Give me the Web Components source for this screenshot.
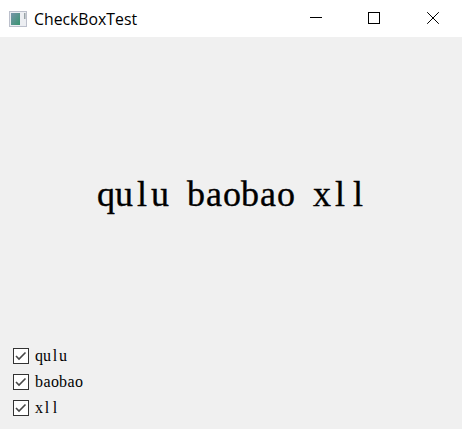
<!DOCTYPE html>
<html>
<head>
<meta charset="utf-8">
<title>CheckBoxTest</title>
<style>
    html, body { margin: 0; height: 100%; }
    body { background: #f0f0f0; overflow: hidden; }
</style>
</head>
<body>
<test-window caption="CheckBoxTest">
    <mono-text slot="display" size="36" text="qulu baobao xll" style="-webkit-text-stroke: 0.35px #000"></mono-text>
    <check-item text="qulu"></check-item>
    <check-item text="baobao"></check-item>
    <check-item text="xll"></check-item>
</test-window>
<script>
// SimSun is not installed: Liberation Serif is 0.5em wide for most letters,
// so pad the narrower ones out to the same cell
class MonoText extends HTMLElement {
    constructor() {
        super();
        this.attachShadow({ mode: 'open' });
    }

    connectedCallback() {
        const size = this.getAttribute('size') || 16;
        const text = this.getAttribute('text') || '';
        const markup = text.replace(/[la]/g, (c) => `<span class="${c}">${c}</span>`);
        this.shadowRoot.innerHTML = `
            <style>
                :host {
                    display: inline-block;
                    font-family: "Liberation Serif", serif;
                    font-size: ${size}px;
                    line-height: 1;
                    color: #000;
                    word-spacing: 0.25em;
                    white-space: nowrap;
                }
                .l { padding: 0 0.111em; }
                .a { padding: 0 0.028em; }
            </style>
            ${markup}
        `;
    }
}

class CheckItem extends HTMLElement {
    constructor() {
        super();
        this.attachShadow({ mode: 'open' });
    }

    connectedCallback() {
        this.shadowRoot.innerHTML = `
            <style>
                :host {
                    display: flex;
                    align-items: center;
                    gap: 6px;
                    height: 26px;
                }
                svg { display: block; flex: none; }
            </style>
            <svg width="16" height="16" viewBox="0 0 16 16">
                <rect x="0.5" y="0.5" width="15" height="15" fill="#fff" stroke="#333"/>
                <path d="M3 8 L6 11 L12.5 4.5" fill="none" stroke="#484848" stroke-width="1.6"/>
            </svg>
            <mono-text size="16" text="${this.getAttribute('text')}"></mono-text>
        `;
    }
}

class TestWindow extends HTMLElement {
    constructor() {
        super();
        this.attachShadow({ mode: 'open' });
    }

    connectedCallback() {
        this.shadowRoot.innerHTML = `
            <style>
                :host {
                    display: flex;
                    flex-direction: column;
                    height: 429px;
                    background: #f0f0f0;
                }
                .titlebar {
                    display: flex;
                    align-items: center;
                    height: 37px;
                    background: #fff;
                    flex: none;
                }
                .app-icon { margin: 0 7px 0 9px; display: block; }
                .caption {
                    flex: 1;
                    font-family: "Open Sans", sans-serif;
                    font-size: 15.8px;
                    color: #000;
                }
                .btn {
                    width: 58.5px;
                    height: 36px;
                    align-self: flex-start;
                    display: flex;
                    align-items: center;
                    justify-content: center;
                }
                .btn svg { display: block; }
                .display {
                    flex: 1;
                    display: flex;
                    align-items: center;
                    justify-content: center;
                    padding: 8px 0 0 2px;
                }
                .checks {
                    padding: 0 0 8px 13px;
                }
            </style>
            <div class="titlebar">
                <svg class="app-icon" width="18" height="16" viewBox="0 0 18 16">
                    <defs>
                        <linearGradient id="g" x1="0" y1="0" x2="1" y2="1">
                            <stop offset="0" stop-color="#7895aa"/>
                            <stop offset="1" stop-color="#37946f"/>
                        </linearGradient>
                    </defs>
                    <rect x="0.5" y="0.5" width="17" height="15" fill="#eceef2" stroke="#bcc0cc"/>
                    <rect x="2" y="2" width="9" height="12" fill="url(#g)"/>
                    <rect x="15" y="2" width="1.5" height="6" fill="#9aa4a8"/>
                </svg>
                <span class="caption">${this.getAttribute('caption')}</span>
                <div class="btn">
                    <svg width="12" height="12" viewBox="0 0 12 12"><path d="M0 5.5 H12" stroke="#000"/></svg>
                </div>
                <div class="btn">
                    <svg width="12" height="12" viewBox="0 0 12 12"><rect x="0.5" y="0.5" width="11" height="11" fill="none" stroke="#000"/></svg>
                </div>
                <div class="btn">
                    <svg width="12" height="12" viewBox="0 0 12 12"><path d="M0.2 0.2 L11.8 11.8 M11.8 0.2 L0.2 11.8" stroke="#000"/></svg>
                </div>
            </div>
            <div class="display"><slot name="display"></slot></div>
            <div class="checks"><slot></slot></div>
        `;
    }
}

customElements.define('mono-text', MonoText);
customElements.define('check-item', CheckItem);
customElements.define('test-window', TestWindow);
</script>
</body>
</html>
